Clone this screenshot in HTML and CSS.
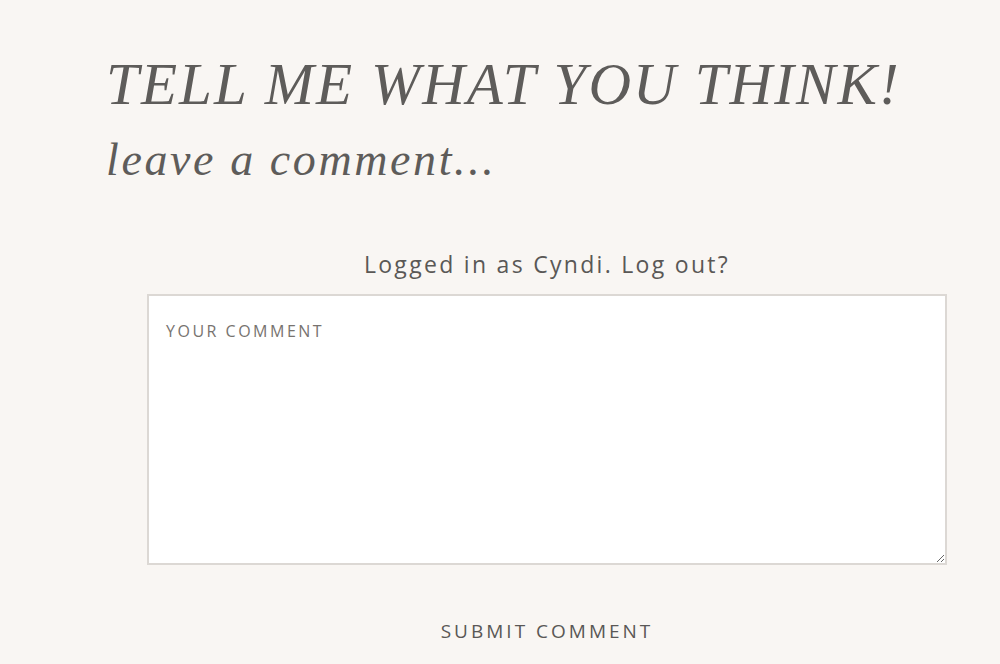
FILE: index.html
```
<!DOCTYPE html>
<html lang="en">
<head>
  <meta charset="UTF-8">
  <title>Leave a comment</title>
  <link rel="stylesheet" href="styles.css">
</head>
<body>
  <div class="comments">
    <h2 class="title">TELL ME WHAT YOU THINK!</h2>
    <h3 class="subtitle">leave a comment...</h3>

    <form class="comment-form">
      <p class="logged-in">Logged in as Cyndi. Log out?</p>
      <textarea class="comment-box" placeholder="YOUR COMMENT"></textarea>
      <button type="submit" class="submit">SUBMIT COMMENT</button>
    </form>
  </div>
</body>
</html>
```

FILE: styles.css
```
* {
  margin: 0;
  padding: 0;
  box-sizing: border-box;
}
body {
  background-color: #f9f6f3;
  color: #5a5856;
  font-family: "Open Sans", sans-serif;
}
.comments {
  padding: 50px 0 0 106px;
}
.title {
  font-family: "Liberation Serif", serif;
  font-style: italic;
  font-weight: normal;
  font-size: 59px;
  line-height: 68px;
  letter-spacing: 2.1px;
  color: #5e5c5a;
}
.subtitle {
  font-family: "Liberation Serif", serif;
  font-style: italic;
  font-weight: normal;
  font-size: 46px;
  line-height: 56px;
  letter-spacing: 2.6px;
  margin-top: 14px;
  color: #5e5c5a;
}
.comment-form {
  width: 800px;
  margin: 60px 0 0 41px;
  display: flex;
  flex-direction: column;
  align-items: center;
}
.logged-in {
  font-size: 23px;
  line-height: 32px;
  letter-spacing: 2.3px;
  margin-bottom: 14px;
}
.comment-box {
  width: 100%;
  height: 271px;
  background: #fff;
  border: 2px solid #dcd8d4;
  padding: 24px 17px;
  font-family: "Open Sans", sans-serif;
  font-size: 16px;
  letter-spacing: 2.5px;
  color: #5a5856;
}
.comment-box::placeholder {
  color: #77736f;
}
.submit {
  margin-top: 53px;
  background: none;
  border: none;
  font-family: "Open Sans", sans-serif;
  font-size: 19px;
  letter-spacing: 3px;
  color: #5a5856;
  cursor: pointer;
}
```
